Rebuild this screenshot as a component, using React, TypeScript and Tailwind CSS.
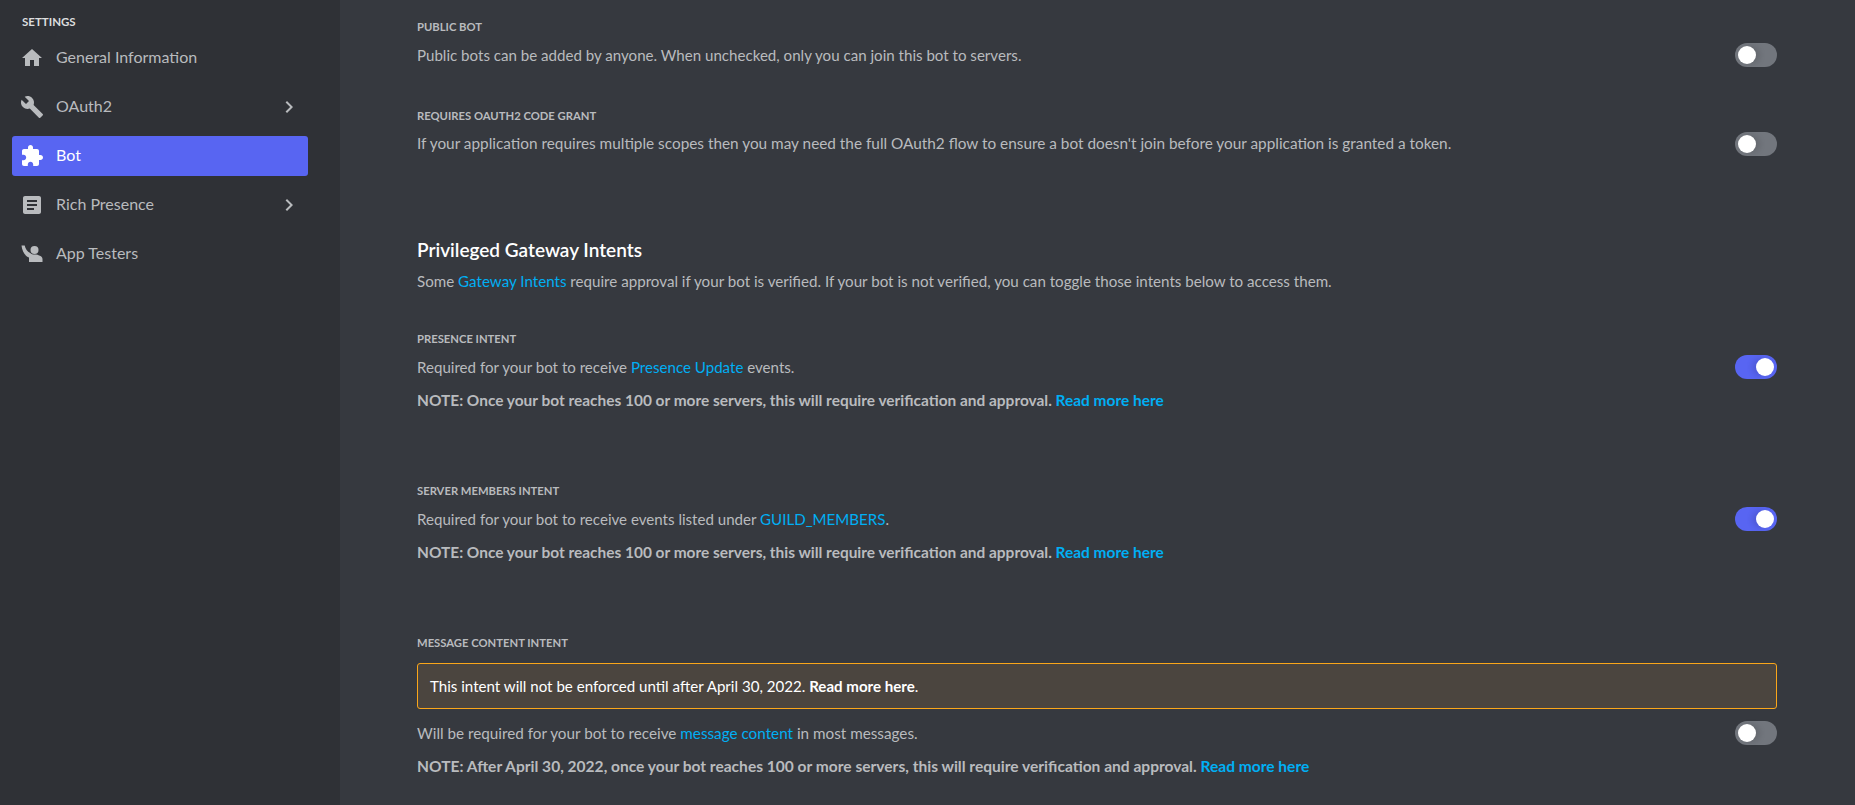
import React from "react";

const font = { fontFamily: "Lato, 'Open Sans', sans-serif" };

function Home() {
  return (
    <svg viewBox="0 0 24 24" className="w-6 h-6 fill-[#b9bbbe]">
      <path d="M10 20v-6h4v6h5v-8h3L12 3 2 12h3v8z" />
    </svg>
  );
}

function Wrench() {
  return (
    <svg viewBox="0 0 24 24" className="w-6 h-6 fill-[#b9bbbe]">
      <path d="M22.7 19l-9.1-9.1c.9-2.3.4-5-1.5-6.9-2-2-5-2.4-7.4-1.3L9 6 6 9 1.6 4.7C.4 7.1.9 10.1 2.9 12.1c1.9 1.9 4.6 2.4 6.9 1.5l9.1 9.1c.4.4 1 .4 1.4 0l2.3-2.3c.5-.4.5-1.1.1-1.4z" />
    </svg>
  );
}

function Puzzle() {
  return (
    <svg viewBox="0 0 24 24" className="w-6 h-6 fill-white">
      <path d="M20.5 11H19V7c0-1.1-.9-2-2-2h-4V3.5C13 2.12 11.88 1 10.5 1S8 2.12 8 3.5V5H4c-1.1 0-1.99.9-1.99 2v3.8H3.5c1.49 0 2.7 1.21 2.7 2.7s-1.21 2.7-2.7 2.7H2V20c0 1.1.9 2 2 2h3.8v-1.5c0-1.49 1.21-2.7 2.7-2.7 1.49 0 2.7 1.21 2.7 2.7V22H17c1.1 0 2-.9 2-2v-4h1.5c1.38 0 2.5-1.12 2.5-2.5S21.88 11 20.5 11z" />
    </svg>
  );
}

function Article() {
  return (
    <svg viewBox="0 0 24 24" className="w-6 h-6 fill-[#b9bbbe]">
      <path d="M19 3H5c-1.1 0-2 .9-2 2v14c0 1.1.9 2 2 2h14c1.1 0 2-.9 2-2V5c0-1.1-.9-2-2-2zm-5 14H7v-2h7v2zm3-4H7v-2h10v2zm0-4H7V7h10v2z" />
    </svg>
  );
}

function Testers() {
  return (
    <svg viewBox="0 0 24 24" className="w-6 h-6 fill-[#b9bbbe]">
      <circle cx="14.5" cy="8" r="4" />
      <path d="M1.5 3.5h3.2c.6 3.2 2.6 6.2 5.5 7.6 1.2 1 2.6 1.5 4.3 1.5 3.6 0 8 1.6 8 4.4V20H9v-4.4C5 14 2 9 1.5 3.5z" />
    </svg>
  );
}

function Chevron() {
  return (
    <svg viewBox="0 0 24 24" className="w-6 h-6 fill-[#b9bbbe]">
      <path d="M8.59 16.59 13.17 12 8.59 7.41 10 6l6 6-6 6z" />
    </svg>
  );
}

function NavItem({ icon, label, active, arrow }: { icon: React.ReactNode; label: string; active?: boolean; arrow?: boolean }) {
  return (
    <div className={`flex items-center h-10 rounded-[3px] pl-[8px] pr-[7px] ${active ? "bg-[#5865f2] text-white" : "text-[#b9bbbe]"}`}>
      <div className="w-6 h-6 mr-3">{icon}</div>
      <span className="flex-1 text-base pb-[2px]">{label}</span>
      {arrow && <Chevron />}
    </div>
  );
}

function Toggle({ on }: { on?: boolean }) {
  return (
    <div className={`w-[42px] h-6 rounded-full flex items-center px-[3px] shrink-0 ${on ? "bg-[#5865f2] justify-end" : "bg-[#72767d] justify-start"}`}>
      <div className={`w-[18px] h-[18px] rounded-full bg-white ${on ? "shadow-[-4px_0_6px_rgba(0,0,0,0.12)]" : "shadow-[4px_0_6px_rgba(0,0,0,0.12)]"}`} />
    </div>
  );
}

function Label({ children }: { children: React.ReactNode }) {
  return <div className="text-[11.25px] leading-4 font-bold uppercase text-[#b9bbbe]">{children}</div>;
}

function ToggleRow({ children, on, size = "text-[15.1px]" }: { children: React.ReactNode; on?: boolean; size?: string }) {
  return (
    <div className="flex items-center justify-between h-6">
      <div className={`${size} text-[#b9bbbe]`}>{children}</div>
      <Toggle on={on} />
    </div>
  );
}

function Note({ children, size = "text-[15.45px]" }: { children: React.ReactNode; size?: string }) {
  return <div className={`${size} leading-5 font-bold text-[#b9bbbe] mt-[11px]`}>{children}</div>;
}

function Link({ children }: { children: React.ReactNode }) {
  return <a className="text-[#00aff4]">{children}</a>;
}

export default function App() {
  return (
    <div className="flex h-screen overflow-hidden bg-[#36393f]" style={font}>
      {/* Sidebar */}
      <aside className="w-[340px] shrink-0 bg-[#2f3136] pl-3 pr-8 pt-[14px]">
        <div className="text-[11.5px] leading-4 font-bold text-[#dcddde] pl-[10px] mb-2">SETTINGS</div>
        <div className="flex flex-col gap-[9px]">
          <NavItem icon={<Home />} label="General Information" />
          <NavItem icon={<Wrench />} label="OAuth2" arrow />
          <NavItem icon={<Puzzle />} label="Bot" active />
          <NavItem icon={<Article />} label="Rich Presence" arrow />
          <NavItem icon={<Testers />} label="App Testers" />
        </div>
      </aside>

      {/* Main */}
      <main className="flex-1 pl-[77px] pr-[78px] pt-[19px]">
        <Label>Public Bot</Label>
        <div className="mt-2">
          <ToggleRow>Public bots can be added by anyone. When unchecked, only you can join this bot to servers.</ToggleRow>
        </div>

        <div className="mt-[41px]">
          <Label>Requires OAuth2 Code Grant</Label>
        </div>
        <div className="mt-2">
          <ToggleRow size="text-[15.35px]">If your application requires multiple scopes then you may need the full OAuth2 flow to ensure a bot doesn't join before your application is granted a token.</ToggleRow>
        </div>

        <h2 className="mt-[82px] text-[19px] leading-6 font-semibold text-white">Privileged Gateway Intents</h2>
        <p className="mt-[7px] text-[15.15px] leading-6 text-[#b9bbbe]">
          Some <Link>Gateway Intents</Link> require approval if your bot is verified. If your bot is not verified, you can toggle those intents below to access them.
        </p>

        <div className="mt-[38px]">
          <Label>Presence Intent</Label>
        </div>
        <div className="mt-2">
          <ToggleRow on>Required for your bot to receive <Link>Presence Update</Link> events.</ToggleRow>
        </div>
        <Note>NOTE: Once your bot reaches 100 or more servers, this will require verification and approval. <Link>Read more here</Link></Note>

        <div className="mt-[73px]">
          <Label>Server Members Intent</Label>
        </div>
        <div className="mt-2">
          <ToggleRow on>Required for your bot to receive events listed under <Link>GUILD_MEMBERS</Link>.</ToggleRow>
        </div>
        <Note>NOTE: Once your bot reaches 100 or more servers, this will require verification and approval. <Link>Read more here</Link></Note>

        <div className="mt-[73px]">
          <Label>Message Content Intent</Label>
        </div>
        <div className="mt-3 h-[46px] flex items-center px-3 border border-[#faa61a] rounded-[3px] bg-[#4b453f] text-[15.1px] text-white">
          <span>This intent will not be enforced until after April 30, 2022. <b>Read more here</b>.</span>
        </div>
        <div className="mt-3">
          <ToggleRow size="text-[15.25px]">Will be required for your bot to receive <Link>message content</Link> in most messages.</ToggleRow>
        </div>
        <Note size="text-[15.55px]">NOTE: After April 30, 2022, once your bot reaches 100 or more servers, this will require verification and approval. <Link>Read more here</Link></Note>
      </main>
    </div>
  );
}
